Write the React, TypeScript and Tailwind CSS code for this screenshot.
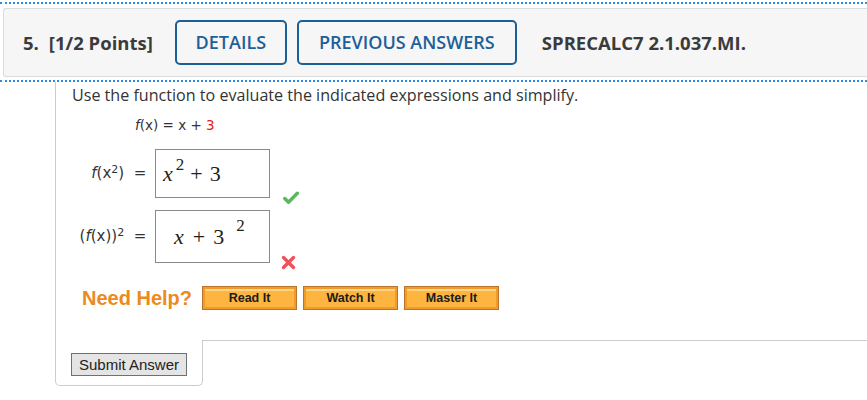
import React from "react";

function Check() {
  return (
    <svg width="16" height="14" viewBox="0 0 16 14">
      <path d="M1.8 7.5 L5.5 11.3 L14.3 2.3" fill="none" stroke="#5cb85c" strokeWidth="3.4" strokeLinecap="round" strokeLinejoin="round" />
    </svg>
  );
}

function Cross() {
  return (
    <svg width="15" height="15" viewBox="0 0 15 15">
      <path d="M2.5 2.5 L12.5 12.5 M12.5 2.5 L2.5 12.5" fill="none" stroke="#f0525a" strokeWidth="3.4" strokeLinecap="round" />
    </svg>
  );
}

function HelpBtn({ label }: { label: string }) {
  return (
    <button className="w-[95px] h-[24px] border border-[#b8762c] bg-[#fdb540] shadow-[inset_0_0_0_2px_#f29b2a,inset_0_4px_0_#ffd58a] text-[12.5px] font-bold text-[#1c1c1c] [font-family:'Liberation_Sans',Arial,sans-serif] leading-none">
      {label}
    </button>
  );
}

export default function App() {
  return (
    <div className="w-[867px] h-[400px] bg-white overflow-hidden pt-[2px] [font-family:'Open_Sans',sans-serif]">
      <div className="border-t-2 border-dotted border-[#2b8be3] pt-[4px]">
        <div className="ml-[3px] h-[69px] border border-r-0 border-[#dcdcdc] bg-[#f6f6f6] rounded-l-[3px] flex items-center pl-[19px] text-[18.5px]">
          <span className="font-bold text-[#3b3b3b]">5.</span>
          <span className="font-bold text-[#3b3b3b] ml-[10px]">[1/2 Points]</span>
          <button className="ml-[22px] h-[45px] w-[112px] border-2 border-[#1b5f97] rounded-[5px] text-[#1d5f98] text-[18px] font-semibold">DETAILS</button>
          <button className="ml-[10px] h-[45px] w-[220px] border-2 border-[#1b5f97] rounded-[5px] text-[#1d5f98] text-[18px] font-semibold">PREVIOUS ANSWERS</button>
          <span className="ml-[25px] font-bold text-[#3b3b3b]">SPRECALC7 2.1.037.MI.</span>
        </div>
      </div>
      <div className="mt-[3px] border-t-2 border-dotted border-[#2b8be3]"></div>
      <div className="ml-[55px] border-l border-[#cccccc] pl-[16px] pt-[3px] pb-[27px]">
        <p className="text-[16.1px] text-[#333] leading-[21px]">Use the function to evaluate the indicated expressions and simplify.</p>
        <div className="mt-[9px] ml-[63px] text-[13.5px] text-[#333] leading-[20px] [font-family:'DejaVu_Sans',Verdana,sans-serif]">
          <i>f</i>(x) = x + <span className="text-[#e0201e]">3</span>
        </div>
        <div className="mt-[14px] flex items-center">
          <div className="w-[83px] flex justify-end pr-[4px] text-[15px] text-[#333] [font-family:'DejaVu_Sans',Verdana,sans-serif]">
            <span><i>f</i>(x<sup className="text-[11px]">2</sup>)&nbsp; =&nbsp;</span>
          </div>
          <div className="w-[115px] h-[49px] border border-[#8a8a8a] flex items-center pl-[7px] text-[22px] text-[#222] [font-family:'Liberation_Serif',serif]">
            <span className="italic">x</span>
            <span className="relative -top-[9px] text-[17px] ml-[3px]">2</span>
            <span className="ml-[6px]">+</span>
            <span className="ml-[7px]">3</span>
          </div>
          <div className="self-end ml-[13px] -mb-[7px]"><Check /></div>
        </div>
        <div className="mt-[12px] flex items-center">
          <div className="w-[83px] flex justify-end pr-[4px] text-[15px] text-[#333] [font-family:'DejaVu_Sans',Verdana,sans-serif]">
            <span>(<i>f</i>(x))<sup className="text-[11px]">2</sup>&nbsp; =&nbsp;</span>
          </div>
          <div className="w-[115px] h-[53px] border border-[#8a8a8a] flex items-center pl-[18px] text-[22px] text-[#222] [font-family:'Liberation_Serif',serif]">
            <span className="italic">x</span>
            <span className="ml-[9px]">+</span>
            <span className="ml-[8px]">3</span>
            <span className="relative -top-[11px] text-[17px] ml-[12px]">2</span>
          </div>
          <div className="self-end ml-[11px] -mb-[7px]"><Cross /></div>
        </div>
        <div className="mt-[20px] flex items-center">
          <span className="ml-[10px] text-[20px] font-bold text-[#ec8a1c] [font-family:'Liberation_Sans',Arial,sans-serif]">Need Help?</span>
          <div className="ml-[10px] flex gap-[6px]">
            <HelpBtn label="Read It" />
            <HelpBtn label="Watch It" />
            <HelpBtn label="Master It" />
          </div>
        </div>
      </div>
      <div className="flex">
        <div className="ml-[55px] w-[148px] h-[46px] border-l border-r border-b border-[#cccccc] rounded-b-[5px] pl-[15px] pt-[12px]">
          <button className="h-[23px] px-[7px] border border-[#707070] bg-[#e4e4e4] text-[15px] text-[#222] leading-none [font-family:'Liberation_Sans',Arial,sans-serif]">Submit Answer</button>
        </div>
        <div className="flex-1 border-t border-[#cccccc]"></div>
      </div>
    </div>
  );
}
